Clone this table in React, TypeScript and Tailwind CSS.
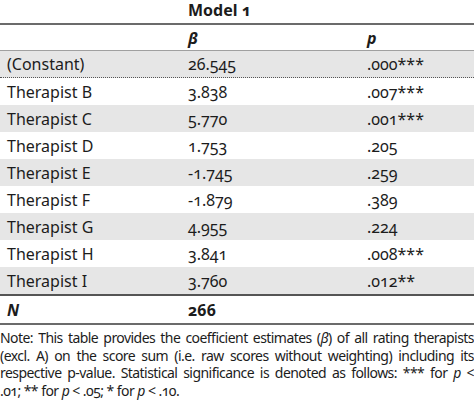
const rows: [string, string, string][] = [
  ["Therapist B", "3.838", ".007***"],
  ["Therapist C", "5.770", ".001***"],
  ["Therapist D", "1.753", ".205"],
  ["Therapist E", "-1.745", ".259"],
  ["Therapist F", "-1.879", ".389"],
  ["Therapist G", "4.955", ".224"],
  ["Therapist H", "3.841", ".008***"],
  ["Therapist I", "3.760", ".012**"],
];

function Row({ cells, shaded }: { cells: [string, string, string]; shaded: boolean }) {
  return (
    <div className={`grid h-[27px] grid-cols-[188px_179px_1fr] items-center ${shaded ? "bg-[#e6e6e6]" : "bg-white"}`}>
      <span className="pl-[7px]">{cells[0]}</span>
      <span>{cells[1]}</span>
      <span>{cells[2]}</span>
    </div>
  );
}

export default function App() {
  return (
    <div className="h-[402px] w-[474px] overflow-hidden bg-white text-[16px] leading-none text-[#1c1c1c] oldstyle-nums [font-family:'Noto_Sans',sans-serif]">
      <div className="grid h-[23px] grid-cols-[188px_1fr] items-center">
        <span />
        <span className="-mt-[4px] font-bold">Model 1</span>
      </div>
      <div className="h-[2px] bg-[#6b6b6b]" />
      <div className="grid h-[26px] grid-cols-[188px_179px_1fr] items-center border-b border-[#a0a0a0] font-bold italic">
        <span />
        <span>β</span>
        <span>p</span>
      </div>
      <div className="grid h-[27px] grid-cols-[188px_179px_1fr] items-center border-b border-dotted border-[#555] bg-[#e6e6e6]">
        <span className="pl-[7px]">(Constant)</span>
        <span>26.545</span>
        <span>.000***</span>
      </div>
      {rows.map((r, i) => (
        <Row key={r[0]} cells={r} shaded={i % 2 === 1} />
      ))}
      <div className="h-[2px] bg-[#555]" />
      <div className="grid h-[27px] grid-cols-[188px_179px_1fr] items-center font-bold">
        <span className="pl-[7px] italic">N</span>
        <span>266</span>
        <span />
      </div>
      <div className="h-[2px] bg-[#6b6b6b]" />
      <div className="pt-[4px] text-[14px] leading-[17.5px] tracking-[-0.55px]">
        <p className="[text-align-last:justify]">
          Note: This table provides the coefficient estimates (<i>β</i>) of all rating therapists
        </p>
        <p className="[text-align-last:justify]">
          (excl. A) on the score sum (i.e. raw scores without weighting) including its
        </p>
        <p className="[text-align-last:justify]">
          respective p-value. Statistical significance is denoted as follows: *** for <i>p</i> &lt;
        </p>
        <p>
          .01; ** for <i>p</i> &lt; .05; * for <i>p</i> &lt; .10.
        </p>
      </div>
    </div>
  );
}
